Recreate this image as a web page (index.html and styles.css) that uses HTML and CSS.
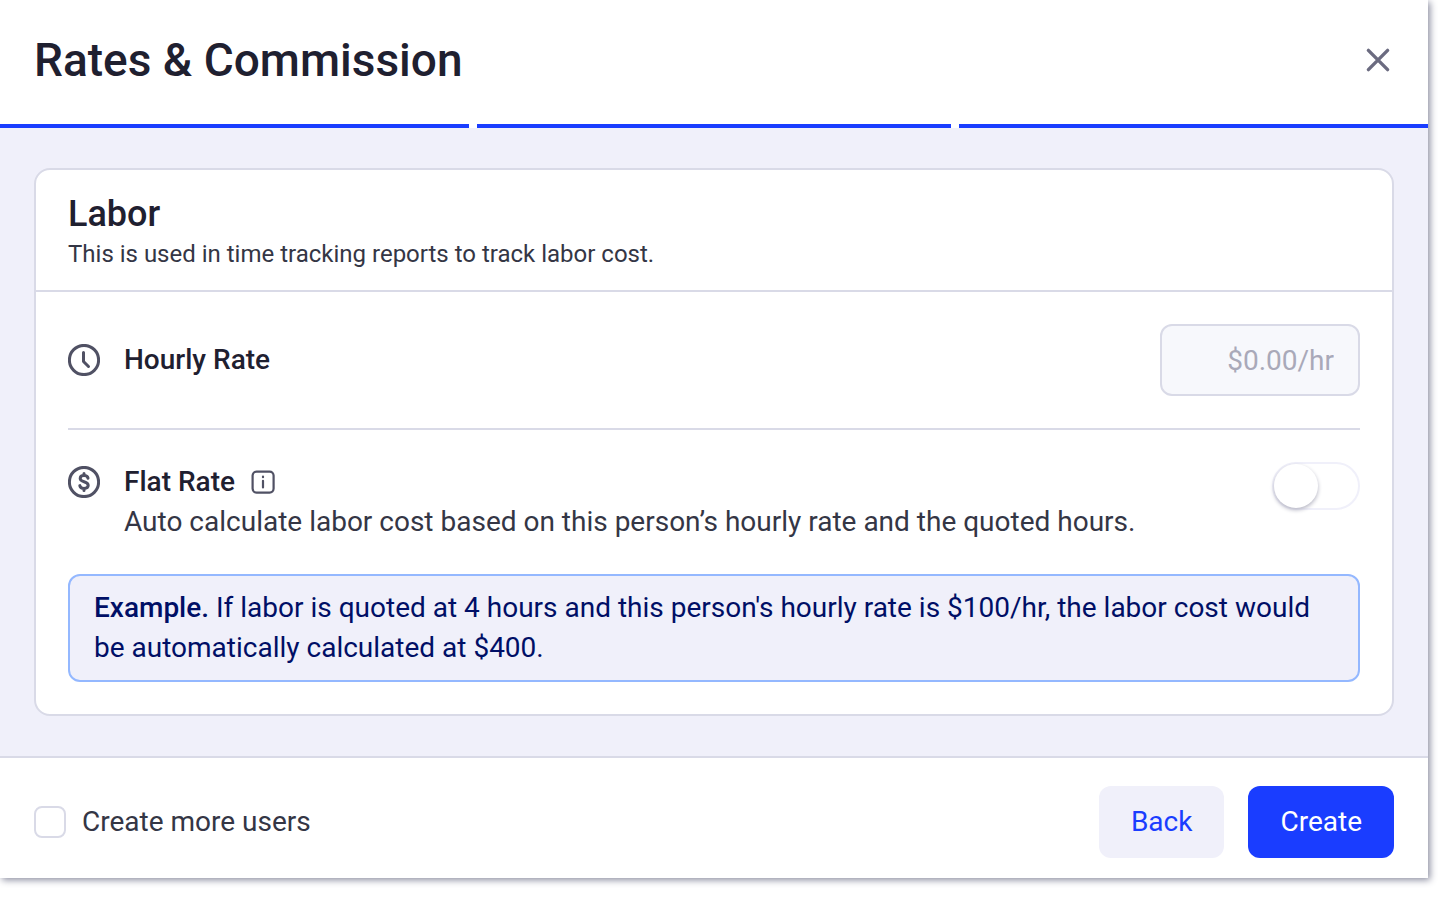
FILE: index.html
```html
<!DOCTYPE html>
<html lang="en">
<head>
    <meta charset="UTF-8">
    <meta name="viewport" content="width=device-width, initial-scale=1">
    <title>Rates &amp; Commission</title>
    <link rel="stylesheet" href="styles.css">
</head>
<body>
<form class="modal">
    <header class="modal-header">
        <h1>Rates &amp; Commission</h1>
        <button class="close" type="button" aria-label="Close">
            <svg width="28" height="28" viewBox="0 0 28 28">
                <path d="M4.4 4.4L23.6 23.6M23.6 4.4L4.4 23.6"/>
            </svg>
        </button>
    </header>

    <!-- steps -->
    <div class="steps">
        <span class="step"></span>
        <span class="step"></span>
        <span class="step"></span>
    </div>

    <main class="modal-body">
        <section class="card">
            <div class="card-header">
                <h2>Labor</h2>
                <p>This is used in time tracking reports to track labor cost.</p>
            </div>
            <div class="card-body">
                <div class="row hourly">
                    <svg class="icon" width="32" height="32" viewBox="0 0 32 32">
                        <circle cx="16" cy="16" r="14.6"/>
                        <path d="M15.5 8.5V17.5L20.5 22.5"/>
                    </svg>
                    <label class="name" for="hourlyRate">Hourly Rate</label>
                    <input class="rate" id="hourlyRate" type="text" placeholder="$0.00/hr">
                </div>
                <div class="row flat">
                    <svg class="icon" width="32" height="32" viewBox="0 0 32 32">
                        <circle cx="16" cy="16" r="14.6"/>
                        <path d="M20 12.2C19.6 10.4 18.2 9.6 16 9.6C13.6 9.6 12.2 10.7 12.2 12.5C12.2 16.8 20.2 14.6 20.2 19.3C20.2 21.2 18.6 22.4 16 22.4C13.6 22.4 12.2 21.4 11.8 19.6M16 7.6V9.6M16 22.4V24.6"/>
                    </svg>
                    <div class="text">
                        <div class="title">
                            <label class="name" for="flatRate">Flat Rate</label>
                            <button class="info" type="button" aria-label="About flat rate">
                                <svg width="24" height="24" viewBox="0 0 24 24">
                                    <rect x="1.6" y="1.6" width="21" height="21" rx="4"/>
                                    <path d="M12 10.8V17.5M12 6.6V7.2"/>
                                </svg>
                            </button>
                        </div>
                        <p>Auto calculate labor cost based on this person’s hourly rate and the quoted hours.</p>
                    </div>
                    <input class="switch" id="flatRate" type="checkbox" role="switch">
                </div>
                <p class="example"><b>Example.</b> If labor is quoted at 4 hours and this person's hourly rate is $100/hr, the labor cost would be automatically calculated at $400.</p>
            </div>
        </section>
    </main>

    <footer class="modal-footer">
        <label class="more"><input type="checkbox">Create more users</label>
        <button class="btn back" type="button">Back</button>
        <button class="btn create" type="submit">Create</button>
    </footer>
</form>
</body>
</html>
```

FILE: styles.css
```css
* {
    box-sizing: border-box;
}

body {
    margin: 0;
    padding: 0 20px 20px 0;
    background: #fff;
    color: #343645;
    font: 28px/40px Roboto, "Liberation Sans", sans-serif;
}

h1, h2, p {
    margin: 0;
}

h1, h2 {
    color: #1f2030;
    font-weight: 500;
}

button, input {
    font: inherit;
}

svg {
    display: block;
    fill: none;
    stroke-linecap: round;
    stroke-linejoin: round;
}

.modal {
    background: #fff;
    box-shadow: 2px 2px 7px #8a8c9f;
}

.modal-header {
    display: flex;
    align-items: center;
    justify-content: space-between;
    padding: 32px 34px 36px;
}

h1 {
    font-size: 46px;
    line-height: 56px;
}

.close {
    padding: 2px;
    border: 0;
    background: none;
}

.close svg {
    stroke: #6b6b80;
    stroke-width: 3.4;
}

.steps {
    display: grid;
    grid-template-columns: 99fr 100fr 99fr;
    gap: 8px;
}

.step {
    height: 4px;
    background: #1a3dff;
}

.modal-body {
    padding: 40px 34px;
    background: #f0f0fa;
}

.card {
    border: 2px solid #d9dae7;
    border-radius: 16px;
    background: #fff;
}

.card-header {
    padding: 24px 32px 16px;
    border-bottom: 2px solid #d9dae7;
}

h2 {
    font-size: 36px;
    line-height: 40px;
}

.card-header p {
    font-size: 24px;
    line-height: 40px;
}

.card-body {
    padding: 32px;
}

.row {
    display: flex;
    align-items: center;
}

.icon {
    flex: none;
    margin-right: 24px;
    stroke: #505164;
    stroke-width: 3;
}

.name {
    color: #1f2030;
    font-weight: 500;
}

.hourly {
    padding-bottom: 32px;
    border-bottom: 2px solid #d9dae7;
}

.rate {
    width: 200px;
    height: 72px;
    margin-left: auto;
    padding: 0 24px;
    border: 2px solid #d9dae7;
    border-radius: 12px;
    background: #f7f8fc;
    text-align: right;
}

.rate::placeholder {
    color: #a9a9b9;
    opacity: 1;
}

.flat {
    align-items: flex-start;
    padding: 32px 0;
}

.flat .icon {
    margin-top: 4px;
}

.text {
    flex: 1;
}

.title {
    display: flex;
    align-items: center;
    gap: 16px;
}

.info {
    padding: 0;
    border: 0;
    background: none;
}

.info svg {
    stroke: #505164;
    stroke-width: 2.2;
}

.switch {
    appearance: none;
    width: 88px;
    height: 48px;
    margin: 0;
    border: 2px solid #f0f0fa;
    border-radius: 24px;
}

.switch::before {
    content: "";
    display: block;
    width: 44px;
    height: 44px;
    border-radius: 50%;
    background: #fff;
    box-shadow: 0 2px 4px #b4b4c2;
}

.switch:checked {
    background: #1a3dff;
}

.switch:checked::before {
    margin-left: 40px;
}

.example {
    padding: 12px 24px;
    border: 2px solid #94b8ff;
    border-radius: 12px;
    background: #f0f0fa;
    color: #000f66;
}

.example b {
    font-weight: 500;
}

.modal-footer {
    display: flex;
    align-items: center;
    gap: 24px;
    padding: 28px 34px 20px;
    border-top: 2px solid #d9dae7;
}

.more {
    display: flex;
    align-items: center;
    gap: 16px;
    margin-right: auto;
}

.more input {
    appearance: none;
    width: 32px;
    height: 32px;
    margin: 0;
    border: 2px solid #d9dae7;
    border-radius: 8px;
}

.more input:checked {
    background: #1a3dff;
}

.btn {
    padding: 16px 32px;
    border: 0;
    border-radius: 12px;
}

.back {
    background: #f0f0fa;
    color: #1a3dff;
}

.create {
    background: #1a3dff;
    color: #fff;
}
```
